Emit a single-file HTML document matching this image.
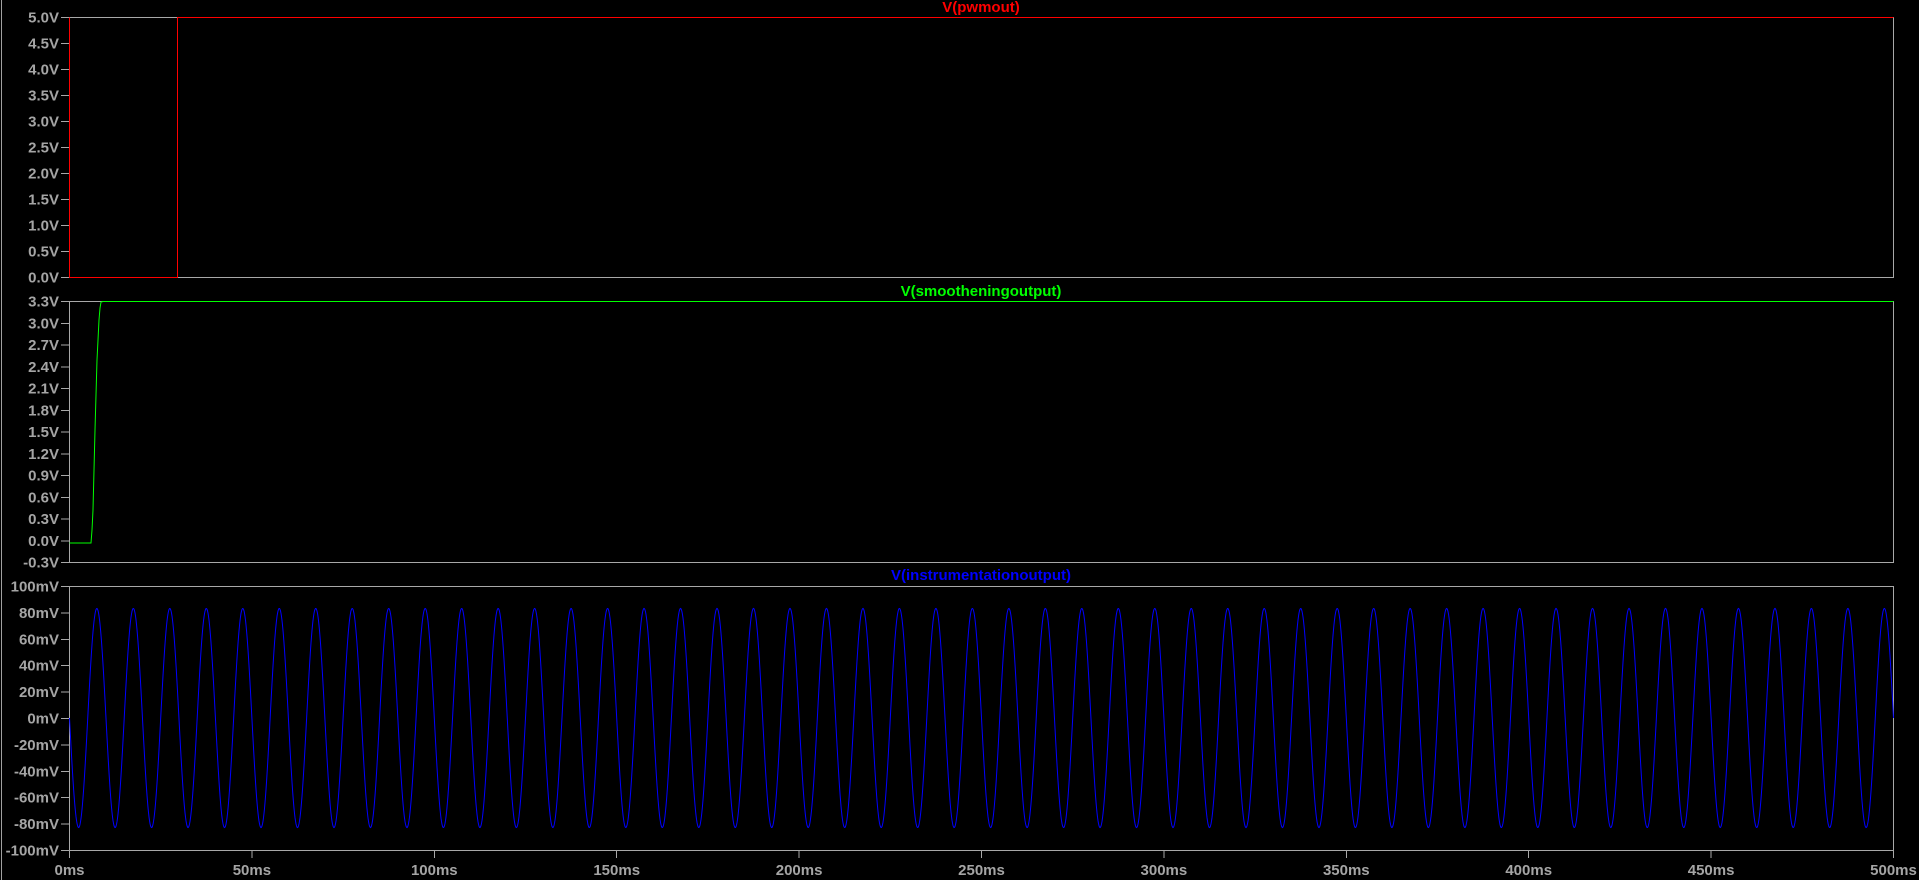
<!DOCTYPE html>
<html><head><meta charset="utf-8"><style>
html,body{margin:0;padding:0;background:#000;width:1919px;height:880px;overflow:hidden}
svg{display:block}
text{font-family:"Liberation Sans",Arial,sans-serif;font-weight:bold;font-size:15px}
.l{fill:#a5a5a5;text-anchor:end}
.x{fill:#a5a5a5;text-anchor:middle}
</style></head><body>
<svg id="s" width="1919" height="880" viewBox="0 0 1919 880" xmlns="http://www.w3.org/2000/svg">
<line x1="1.5" y1="0" x2="1.5" y2="880" stroke="#a0a0a0" stroke-width="1"/>
<g fill="none" stroke="#a8a8a8" stroke-width="1" shape-rendering="crispEdges">
<rect x="69.5" y="17.5" width="1824" height="260"/>
<rect x="69.5" y="301.5" width="1824" height="261"/>
<rect x="69.5" y="586.5" width="1824" height="264"/>
</g>
<g id="ticks" stroke="#a8a8a8" stroke-width="1" shape-rendering="crispEdges"></g>
<g id="labels"></g>
<text x="981" y="12" fill="#ff0000" text-anchor="middle">V(pwmout)</text>
<text x="981" y="296" fill="#00ff00" text-anchor="middle">V(smootheningoutput)</text>
<text x="981" y="580" fill="#0000ff" text-anchor="middle">V(instrumentationoutput)</text>
<polyline fill="none" stroke="#ff0000" stroke-width="1" shape-rendering="crispEdges" points="69.5,17.5 69.5,277.5 177.5,277.5 177.5,17.5 1893.5,17.5"/>
<polyline fill="none" stroke="#00ff00" stroke-width="1" points="69.5,543 91,543 92,530 93,510 94,470 95,430 96,395 97,360 98,340 99,320 100,308 101,302 103,301.5 1893.5,301.5"/>
<path id="sine" fill="none" stroke="#0000ff" stroke-width="1"/>
</svg>
<script>
var s='http://www.w3.org/2000/svg';
function el(p,t,a,txt){var e=document.createElementNS(s,t);for(var k in a)e.setAttribute(k,a[k]);if(txt!==undefined)e.textContent=txt;document.getElementById(p).appendChild(e);}
for(var i=0;i<=10;i++){var y=17.5+i*26;var v=(5-i*0.5).toFixed(1)+'V';el('ticks','line',{x1:61,y1:y,x2:69,y2:y});el('labels','text',{x:59,y:y+5,'class':'l'},v);}
for(var i=0;i<=12;i++){var y=301.5+i*(261/12);var v=(3.3-i*0.3).toFixed(1)+'V';el('ticks','line',{x1:61,y1:y,x2:69,y2:y});el('labels','text',{x:59,y:y+5,'class':'l'},v);}
for(var i=0;i<=10;i++){var y=586.5+i*26.4;var n=100-i*20;el('ticks','line',{x1:61,y1:y,x2:69,y2:y});el('labels','text',{x:59,y:y+5,'class':'l'},n+'mV');}
for(var i=0;i<=10;i++){var x=69.5+i*182.4;el('ticks','line',{x1:x,y1:850,x2:x,y2:858});el('labels','text',{x:x,y:875,'class':'x'},(i*50)+'ms');}
var d='';for(var px=0;px<=1824;px+=0.5){var t=px/1824*500;var v=-83*Math.sin(2*Math.PI*t/10);var y=718-v*1.32;d+=(px?'L':'M')+(69.5+px).toFixed(1)+','+y.toFixed(1);}
document.getElementById('sine').setAttribute('d',d);
</script>
</body></html>
